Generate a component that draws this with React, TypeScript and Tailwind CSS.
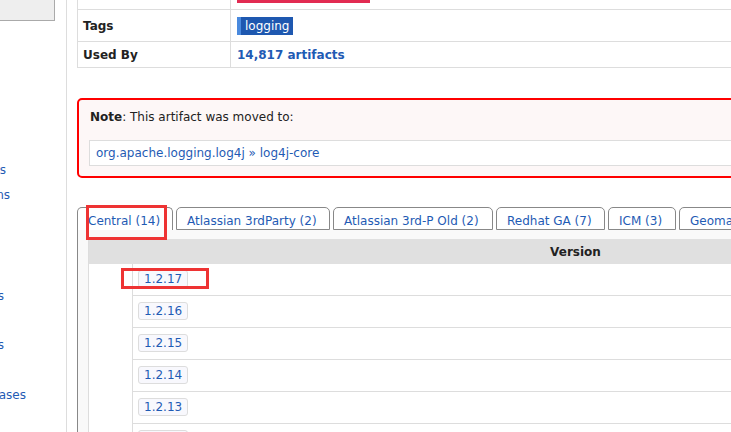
import React from 'react';

const sideLinks = [
    { text: 'Popular Categories', w: 'w-[6px]', mt: 'mt-[141px]' },
    { text: 'Top Collections', w: 'w-[10px]', mt: 'mt-[9px]' },
    { text: 'Web Assets', w: 'w-[4px]', mt: 'mt-[85px]' },
    { text: 'Top Projects', w: 'w-[4px]', mt: 'mt-[33px]' },
    { text: 'Latest Releases', w: 'w-[26px]', mt: 'mt-[34px]' },
];

const tabs = [
    { label: 'Central (14)', w: 'w-[96px]', active: true },
    { label: 'Atlassian 3rdParty (2)', w: 'w-[154px]' },
    { label: 'Atlassian 3rd-P Old (2)', w: 'w-[160px]' },
    { label: 'Redhat GA (7)', w: 'w-[109px]' },
    { label: 'ICM (3)', w: 'w-[68px]' },
    { label: 'Geomajas (1)', w: 'w-[110px]' },
];

const versions = ['1.2.17', '1.2.16', '1.2.15', '1.2.14', '1.2.13', '1.2.12'];

const App = () => {
    return (
        <div className="relative w-[731px] h-[432px] overflow-hidden bg-white flex font-['DejaVu_Sans',sans-serif] text-[12px] leading-4 text-[#222]">
            {/* sidebar, scrolled so only the link ends show */}
            <div className="w-[67px] shrink-0 border-r border-[#ddd] flex flex-col">
                <div className="w-[55px] h-[21px] bg-[#eee] border-r border-b border-[#aaa]" />
                {sideLinks.map((l) => (
                    <div key={l.text} className={`${l.mt} ${l.w} h-4 flex justify-end overflow-hidden whitespace-nowrap text-[#1f5bb4]`}>
                        <span className="shrink-0">{l.text}</span>
                    </div>
                ))}
            </div>

            <div className="ml-[10px] w-[700px] shrink-0 flex flex-col">
                {/* artifact info table */}
                <div className="border-l border-[#ddd]">
                    <div className="flex h-[10px] border-b border-[#ddd]">
                        <div className="w-[153px] border-r border-[#ddd]" />
                        <div className="pl-[6px]">
                            <div className="w-[133px] h-[3px] bg-[#e22b52]" />
                        </div>
                    </div>
                    <div className="flex h-[32px] border-b border-[#ddd]">
                        <div className="w-[153px] border-r border-[#ddd] pl-[5px] flex items-center font-bold">Tags</div>
                        <div className="pl-[6px] flex items-center">
                            <span className="inline-flex items-center h-[18px] bg-[#1e58b0] border-l-4 border-[#4a8ade] px-[4px] text-white">logging</span>
                        </div>
                    </div>
                    <div className="flex h-[26px] border-b border-[#ddd]">
                        <div className="w-[153px] border-r border-[#ddd] pl-[5px] flex items-center font-bold">Used By</div>
                        <div className="pl-[6px] flex items-center font-bold text-[#1f5bb4]">14,817 artifacts</div>
                    </div>
                </div>

                {/* moved note */}
                <div className="mt-[30px] border-2 border-[#f00] rounded-l-[5px] bg-[#fdf7f7] pt-[9px] pb-[10px] pl-[10px]">
                    <div className="pl-[1px]">
                        <b>Note</b>: This artifact was moved to:
                    </div>
                    <div className="mt-[15px] h-[26px] border border-[#ddd] bg-white flex items-center pl-[6px] text-[#1f5bb4]">
                        org.apache.logging.log4j » log4j-core
                    </div>
                </div>

                {/* repository tabs */}
                <div className="mt-[29px] flex gap-[3px] h-[23px]">
                    {tabs.map((t) => (
                        <div
                            key={t.label}
                            className={`${t.w} shrink-0 h-[23px] border border-[#888] rounded-t-[5px] bg-white pl-[10px] pt-[5px] whitespace-nowrap overflow-hidden text-[#1f5bb4] ${t.active ? 'border-b-0' : ''}`}
                        >
                            {t.label}
                        </div>
                    ))}
                </div>
                <div className="flex-1 border-l border-[#888] bg-[#f9f9f9] pl-[10px] pt-[9px]">
                    <div className="w-[930px] border-l border-[#ddd] bg-white">
                        <div className="flex h-[25px] bg-[#e0e0e0] font-bold">
                            <div className="w-[44px]" />
                            <div className="w-[886px] flex items-center justify-center">Version</div>
                        </div>
                        <div className="flex">
                            <div className="w-[44px] border-r border-[#ddd]" />
                            <div className="flex-1">
                                {versions.map((v) => (
                                    <div key={v} className="h-[32px] border-b border-[#ddd] pl-[5px] pt-[6px]">
                                        <span className="inline-block h-[18px] border border-[#ddd] rounded-[3px] bg-[#f8f8fd] px-[5px] text-[#1f5bb4]">{v}</span>
                                    </div>
                                ))}
                            </div>
                        </div>
                    </div>
                </div>
            </div>

            {/* red annotation boxes */}
            <div className="absolute left-[86px] top-[205px] w-[81px] h-[35px] border-[3px] border-[#ee3333]" />
            <div className="absolute left-[121px] top-[268px] w-[88px] h-[21px] border-[3px] border-[#ee3333]" />
        </div>
    );
};

export default App;
